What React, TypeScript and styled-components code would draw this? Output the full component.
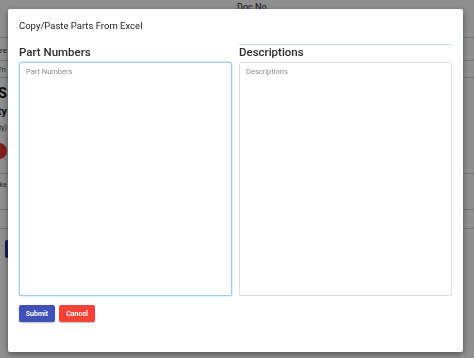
import React from "react";
import styled, { createGlobalStyle } from "styled-components";

const Global = createGlobalStyle`
  html, body { margin: 0; padding: 0; }
  body { font-family: Roboto, "Liberation Sans", Arial, sans-serif; background: #fff; }
  * { box-sizing: border-box; }
`;

const Page = styled.div`
  width: 474px;
  height: 358px;
  overflow: hidden;
  background: #fff;
  display: flex;
  flex-direction: column;
`;

const Header = styled.div`
  height: 38px;
  border-bottom: 1px solid #d6d6d6;
  display: flex;
  align-items: flex-start;
  padding: 2px 0 0 237px;
  font-size: 9px;
  color: #222;
`;

const Block = styled.div<{ $h: number; $line?: boolean }>`
  height: ${(p) => p.$h}px;
  border-bottom: 1px solid ${(p) => (p.$line ? "#d6d6d6" : "transparent")};
  display: flex;
  flex-direction: column;
`;

const Peeks = styled.div<{ $w: number }>`
  width: ${(p) => p.$w}px;
  display: flex;
  flex-direction: column;
  align-items: flex-end;
  white-space: nowrap;
`;

const Peek = styled.div<{ $size: number; $bold?: boolean; $top: number; $color?: string }>`
  font-size: ${(p) => p.$size}px;
  line-height: ${(p) => p.$size + 2}px;
  font-weight: ${(p) => (p.$bold ? 700 : 400)};
  color: ${(p) => p.$color || "#111"};
  margin-top: ${(p) => p.$top}px;
`;

const RedDot = styled.div`
  width: 24px;
  height: 16px;
  margin-top: 10px;
  border-radius: 8px;
  background: #e53935;
`;

const BlueBar = styled.div`
  width: 30px;
  height: 18px;
  margin: 11px 0 0 5px;
  border-radius: 2px;
  background: #283593;
`;

const Backdrop = styled.div`
  position: fixed;
  inset: 0;
  background: rgba(0, 0, 0, 0.44);
`;

const Modal = styled.div`
  position: fixed;
  left: 8px;
  top: 9px;
  width: 455px;
  height: 343px;
  background: #fff;
  border-radius: 2px;
  box-shadow: 0 2px 6px rgba(0, 0, 0, 0.45);
  padding: 11px 11px 0;
  display: flex;
  flex-direction: column;
`;

const Title = styled.div`
  font-size: 9.5px;
  line-height: 12px;
  color: #222;
  margin-bottom: 12px;
`;

const Columns = styled.div`
  display: grid;
  grid-template-columns: 213px 213px;
  column-gap: 7px;
`;

const Column = styled.div<{ $rule?: boolean }>`
  display: flex;
  flex-direction: column;
  border-top: 1px solid ${(p) => (p.$rule ? "#c3dbf0" : "transparent")};
`;

const Label = styled.div`
  font-size: 11.5px;
  line-height: 14px;
  font-weight: 500;
  color: #2b2b2b;
  margin-bottom: 3px;
`;

const Area = styled.textarea<{ $active?: boolean }>`
  width: 213px;
  height: 234px;
  resize: none;
  border: 1px solid ${(p) => (p.$active ? "#9fcbef" : "#dcdcdc")};
  box-shadow: ${(p) => (p.$active ? "0 0 0 0.5px #c6e1f7" : "none")};
  border-radius: 2px;
  padding: 4px 6px;
  font-family: Roboto, "Liberation Sans", Arial, sans-serif;
  font-size: 7.5px;
  line-height: 10px;
  color: #333;
  outline: none;
  &::placeholder { color: #8a8a8a; }
`;

const Actions = styled.div`
  display: flex;
  gap: 4px;
  margin-top: 9px;
`;

const Btn = styled.button<{ $color: string }>`
  width: 36px;
  height: 17px;
  border: none;
  border-radius: 2px;
  background: ${(p) => p.$color};
  color: #fff;
  font-family: Roboto, "Liberation Sans", Arial, sans-serif;
  font-size: 7px;
  font-weight: 700;
  padding: 0;
  box-shadow: 0 1px 1.5px rgba(0, 0, 0, 0.25);
`;

export default function App() {
  return (
    <>
      <Global />
      <Page>
        <Header>Doc No</Header>
        <Block $h={23} $line>
          <Peeks $w={7}>
            <Peek $size={8} $top={8} $color="#333">Refere</Peek>
          </Peeks>
        </Block>
        <Block $h={17} $line>
          <Peeks $w={6}>
            <Peek $size={8} $top={4} $color="#555">Tn</Peek>
          </Peeks>
        </Block>
        <Block $h={96} $line>
          <Peeks $w={7}>
            <Peek $size={14} $bold $top={7}>Qty S</Peek>
            <Peek $size={11} $bold $top={4}>Qty</Peek>
            <Peek $size={7} $top={6} $color="#444">(Qty)</Peek>
            <RedDot />
          </Peeks>
        </Block>
        <Block $h={36} $line>
          <Peeks $w={7}>
            <Peek $size={7} $top={7} $color="#444">Make</Peek>
          </Peeks>
        </Block>
        <Block $h={19} $line />
        <Block $h={40}>
          <BlueBar />
        </Block>
      </Page>
      <Backdrop />
      <Modal>
        <Title>Copy/Paste Parts From Excel</Title>
        <Columns>
          <Column>
            <Label>Part Numbers</Label>
            <Area $active placeholder="Part Numbers" />
          </Column>
          <Column $rule>
            <Label>Descriptions</Label>
            <Area placeholder="Descriptions" />
          </Column>
        </Columns>
        <Actions>
          <Btn $color="#3f51b5">Submit</Btn>
          <Btn $color="#f44336">Cancel</Btn>
        </Actions>
      </Modal>
    </>
  );
}
